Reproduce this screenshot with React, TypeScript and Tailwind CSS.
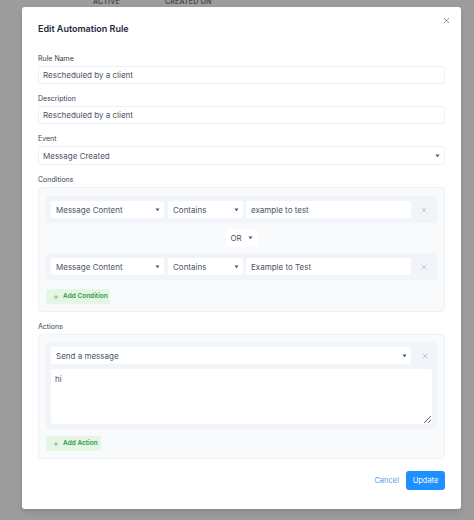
import { X, Plus } from 'lucide-react'

function Caret() {
  return (
    <svg width="5" height="4" viewBox="0 0 5 4" className="shrink-0">
      <path d="M0.5 0.5 H4.5 L2.5 3.3 Z" fill="#4b5563" />
    </svg>
  )
}

function Select({ value, className }: { value: string; className: string }) {
  return (
    <div className={`flex h-[17px] items-center justify-between rounded-[2px] bg-white pl-[5px] pr-[4px] text-[8px] text-[#4b5563] ${className}`}>
      <span>{value}</span>
      <Caret />
    </div>
  )
}

function Field({ label, children }: { label: string; children: React.ReactNode }) {
  return (
    <div className="flex flex-col">
      <label className="h-[9px] text-[7px] leading-[9px] text-[#374151]">{label}</label>
      <div className="mt-[3px]">{children}</div>
    </div>
  )
}

function ConditionRow({ text }: { text: string }) {
  return (
    <div className="flex h-[27px] items-center rounded-[3px] bg-[#f1f4f8] pl-[5px]">
      <Select value="Message Content" className="w-[113px]" />
      <Select value="Contains" className="ml-[4px] w-[75px]" />
      <div className="ml-[3px] flex h-[17px] flex-1 items-center rounded-[2px] bg-white px-[5px] text-[8px] text-[#4b5563]">
        {text}
      </div>
      <div className="flex w-[26px] justify-center">
        <X size={8} strokeWidth={1.4} color="#8b929c" />
      </div>
    </div>
  )
}

function AddButton({ label, className }: { label: string; className: string }) {
  return (
    <button className={`flex h-[15px] items-center gap-[4px] rounded-[2px] bg-[#e5f6e6] pl-[7px] text-[6.5px] font-semibold text-[#2f9a3f] ${className}`}>
      <Plus size={6} strokeWidth={2} />
      {label}
    </button>
  )
}

export default function App() {
  return (
    <div className="relative h-[520px] w-[474px] overflow-hidden bg-[#9c9c9c]" style={{ fontFamily: 'Inter, "Liberation Sans", sans-serif' }}>
      {/* page behind the overlay */}
      <div className="absolute -top-[3px] left-0 flex text-[7px] font-semibold leading-[9px] tracking-wide text-[#4a4a4a]">
        <span className="ml-[93px]">ACTIVE</span>
        <span className="ml-[45px]">CREATED ON</span>
      </div>

      {/* Modal */}
      <div className="relative ml-[22px] mt-[7px] h-[502px] w-[439px] rounded-[3px] bg-white px-4 pt-[16px] shadow-md">
        <button className="absolute right-[10px] top-[9px] text-[#4b5563]">
          <X size={9} strokeWidth={1.6} />
        </button>

        <h2 className="h-[12px] text-[9px] font-semibold leading-[12px] text-[#1f2937]">Edit Automation Rule</h2>

        <div className="mt-[19px] flex flex-col gap-[10px]">
          <Field label="Rule Name">
            <div className="flex h-[18px] items-center rounded-[2px] border border-[#eef0f3] px-[4px] text-[8px] text-[#4b5563]">
              Rescheduled by a client
            </div>
          </Field>
          <Field label="Description">
            <div className="flex h-[18px] items-center rounded-[2px] border border-[#eef0f3] px-[4px] text-[8px] text-[#4b5563]">
              Rescheduled by a client
            </div>
          </Field>
          <Field label="Event">
            <div className="flex h-[19px] items-center justify-between rounded-[2px] border border-[#eef0f3] pl-[4px] pr-[4px] text-[8px] text-[#4b5563]">
              <span>Message Created</span>
              <Caret />
            </div>
          </Field>
          <Field label="Conditions">
            <div className="rounded-[4px] border border-[#eef1f5] bg-[#f8fafc] px-[7px] pb-[7px] pt-[8px]">
              <ConditionRow text="example to test" />
              <div className="my-[6px] flex justify-center">
                <div className="flex h-[18px] w-[32px] items-center justify-between rounded-[2px] bg-white pl-[5px] pr-[5px] text-[8px] text-[#4b5563]">
                  <span>OR</span>
                  <Caret />
                </div>
              </div>
              <ConditionRow text="Example to Test" />
              <AddButton label="Add Condition" className="mt-[9px] w-[64px]" />
            </div>
          </Field>
          <Field label="Actions">
            <div className="rounded-[4px] border border-[#eef1f5] bg-[#f8fafc] px-[7px] pb-[7px] pt-[7px]">
              <div className="rounded-[3px] bg-[#f1f4f8] pb-[5px] pl-[5px] pr-[5px] pt-[5px]">
                <div className="flex items-center">
                  <Select value="Send a message" className="flex-1" />
                  <div className="flex w-[21px] justify-end pr-[3px]">
                    <X size={8} strokeWidth={1.4} color="#8b929c" />
                  </div>
                </div>
                <textarea
                  defaultValue="hi"
                  className="mt-[5px] block h-[55px] w-full rounded-[2px] bg-white px-[4px] py-[4px] text-[8px] text-[#4b5563] outline-none"
                />
              </div>
              <AddButton label="Add Action" className="mt-[7px] w-[55px]" />
            </div>
          </Field>
        </div>

        <div className="mt-[12px] flex items-center justify-end gap-[7px]">
          <button className="text-[7.5px] text-[#5b9be0]">Cancel</button>
          <button className="h-[19px] w-[39px] rounded-[3px] bg-[#1e90ff] text-[7.5px] text-white">Update</button>
        </div>
      </div>
    </div>
  )
}
